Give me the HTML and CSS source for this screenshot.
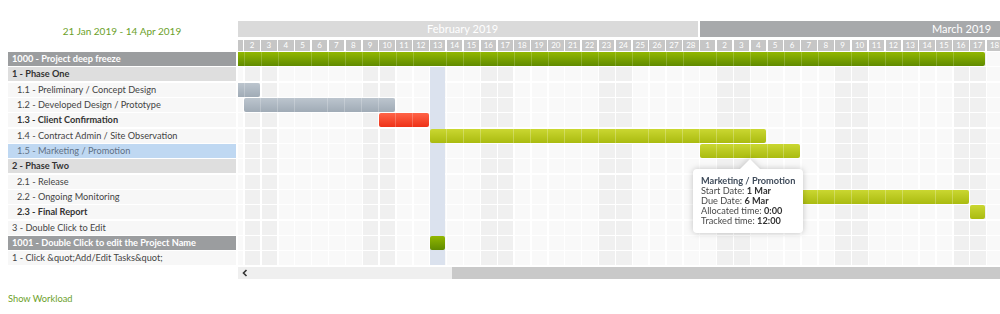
FILE: index.html
```html
<!DOCTYPE html>
<html>
<head>
<meta charset="utf-8">
<link rel="stylesheet" href="styles.css">
</head>
<body>
<div class="page">
  <div class="list">
    <div class="range">21 Jan 2019 - 14 Apr 2019</div>
    <div class="trow project">1000 - Project deep freeze</div>
    <div class="trow phase">1 - Phase One</div>
    <div class="trow task">1.1 - Preliminary / Concept Design</div>
    <div class="trow task">1.2 - Developed Design / Prototype</div>
    <div class="trow task strong">1.3 - Client Confirmation</div>
    <div class="trow task">1.4 - Contract Admin / Site Observation</div>
    <div class="trow task selected">1.5 - Marketing / Promotion</div>
    <div class="trow phase">2 - Phase Two</div>
    <div class="trow task">2.1 - Release</div>
    <div class="trow task">2.2 - Ongoing Monitoring</div>
    <div class="trow task strong">2.3 - Final Report</div>
    <div class="trow plain">3 - Double Click to Edit</div>
    <div class="trow project">1001 - Double Click to edit the Project Name</div>
    <div class="trow plain last">1 - Click &amp;quot;Add/Edit Tasks&amp;quot;</div>
  </div>
  <div class="chart">
    <div class="inner">
      <div class="months">
        <div class="month feb">February 2019</div>
        <div class="month mar">March 2019</div>
      </div>
      <div class="days">
        <span>1</span><span>2</span><span>3</span><span>4</span><span>5</span><span>6</span><span>7</span><span>8</span><span>9</span><span>10</span><span>11</span><span>12</span><span>13</span><span>14</span><span>15</span><span>16</span><span>17</span><span>18</span><span>19</span><span>20</span><span>21</span><span>22</span><span>23</span><span>24</span><span>25</span><span>26</span><span>27</span><span>28</span><span>1</span><span>2</span><span>3</span><span>4</span><span>5</span><span>6</span><span>7</span><span>8</span><span>9</span><span>10</span><span>11</span><span>12</span><span>13</span><span>14</span><span>15</span><span>16</span><span>17</span><span>18</span><span>19</span><span>20</span><span>21</span><span>22</span><span>23</span><span>24</span><span>25</span><span>26</span><span>27</span><span>28</span><span>29</span><span>30</span><span>31</span>
      </div>
      <div class="rows">
        <div class="crow"><div class="bar green" style="grid-column: 1 / 46"></div></div>
        <div class="crow"></div>
        <div class="crow"><div class="bar gray" style="grid-column: 1 / 3"></div></div>
        <div class="crow"><div class="bar gray" style="grid-column: 2 / 11"></div></div>
        <div class="crow"><div class="bar red" style="grid-column: 10 / 13"></div></div>
        <div class="crow"><div class="bar lime" style="grid-column: 13 / 33"></div></div>
        <div class="crow"><div class="bar lime" style="grid-column: 29 / 35"></div></div>
        <div class="crow"></div>
        <div class="crow"></div>
        <div class="crow"><div class="bar lime" style="grid-column: 30 / 45"></div></div>
        <div class="crow"><div class="bar lime" style="grid-column: 45 / 46"></div></div>
        <div class="crow"></div>
        <div class="crow"><div class="bar green" style="grid-column: 13 / 14"></div></div>
        <div class="crow last"></div>
      </div>
    </div>
    <div class="scrollbar">
      <span class="arrow"><svg width="6" height="8" viewBox="0 0 6 8"><polyline points="4.5,1 1.5,4 4.5,7" fill="none" stroke="#333" stroke-width="1.6"/></svg></span>
      <div class="thumb"></div>
    </div>
    <div class="tip">
      <div class="tip-title">Marketing / Promotion</div>
      <div>Start Date: <b>1 Mar</b></div>
      <div>Due Date: <b>6 Mar</b></div>
      <div>Allocated time: <b>0:00</b></div>
      <div>Tracked time: <b>12:00</b></div>
    </div>
  </div>
</div>
<div class="workload">Show Workload</div>
</body>
</html>
```
FILE: styles.css
```css
html, body {
  margin: 0;
  padding: 0;
  background: #fff;
  overflow: hidden;
}
body {
  font-family: Lato, "Open Sans", "Liberation Sans", sans-serif;
  color: #444;
}
.page {
  display: flex;
  padding-top: 21px;
  padding-left: 8px;
}
.list {
  width: 228px;
  flex: none;
  margin-right: 2px;
}
.range {
  height: 31px;
  box-sizing: border-box;
  padding-top: 4px;
  font-size: 10px;
  line-height: 12px;
  text-align: center;
  color: #6c9f2a;
}
.trow {
  height: 14px;
  line-height: 14px;
  margin-bottom: 1.333px;
  font-size: 9.2px;
  padding-left: 4px;
  white-space: nowrap;
  overflow: hidden;
  background: #f7f7f7;
  color: #444;
}
.trow.last { margin-bottom: 0; }
.trow.project {
  background: #9b9d9f;
  color: #fff;
  font-weight: 700;
}
.trow.phase {
  background: #dedede;
  color: #333;
  font-weight: 700;
}
.trow.task { padding-left: 9px; }
.trow.strong { font-weight: 700; color: #333; }
.trow.selected { background: #bfd8f2; color: #5f7185; }

.chart {
  width: 762px;
  flex: none;
  overflow: hidden;
  position: relative;
}
.inner {
  width: 995.625px;
  margin-left: -10.5px;
}
.months {
  display: flex;
  height: 16px;
  margin-bottom: 3px;
}
.month {
  height: 16px;
  line-height: 16px;
  font-size: 11px;
  color: #fff;
  text-align: center;
  flex: none;
}
.month.feb {
  width: 470px;
  margin-right: 2.5px;
  background: #dadada;
}
.month.mar {
  width: 523.125px;
  background: #a7a9ab;
}
.days {
  display: grid;
  grid-template-columns: repeat(59, 16.875px);
  height: 10.5px;
  margin-bottom: 1.5px;
}
.days span {
  margin-right: 1.5px;
  background: #c6c6c6;
  color: #fff;
  font-size: 8px;
  line-height: 10.5px;
  text-align: center;
}
.rows {
  background:
    linear-gradient(#dbe2ee, #dbe2ee) 202.5px 15.333px / 15.375px calc(100% - 15.333px) no-repeat,
    #fff;
}
.crow {
  height: 14px;
  margin-bottom: 1.333px;
  display: grid;
  grid-template-columns: repeat(59, 16.875px);
  grid-template-rows: 14px;
  background:
    repeating-linear-gradient(90deg, transparent 0 15.375px, #fff 15.375px 16.875px),
    linear-gradient(#dbe2ee, #dbe2ee) 202.5px 0 / 15.375px 100% no-repeat,
    repeating-linear-gradient(90deg, #f9f9f9 0 16.875px, #f0f0f0 16.875px 50.625px, #f9f9f9 50.625px 118.125px);
}
.crow.last { margin-bottom: 0; }
.bar {
  grid-row: 1;
  margin-right: 1.5px;
  border-radius: 2px;
  height: 14px;
}
.bar.green {
  background:
    repeating-linear-gradient(90deg, transparent 0 15.9px, rgba(255,255,255,0.18) 15.9px 16.875px),
    linear-gradient(#92b700, #608b00);
}
.bar.lime {
  background:
    repeating-linear-gradient(90deg, transparent 0 15.9px, rgba(255,255,255,0.25) 15.9px 16.875px),
    linear-gradient(#cad731, #aabb10);
}
.bar.gray {
  background:
    repeating-linear-gradient(90deg, transparent 0 15.9px, rgba(255,255,255,0.22) 15.9px 16.875px),
    linear-gradient(#bcc5ce, #a0abb6);
}
.bar.red {
  background:
    repeating-linear-gradient(90deg, transparent 0 15.9px, rgba(255,255,255,0.22) 15.9px 16.875px),
    linear-gradient(#ff6448, #ee3218);
}
.scrollbar {
  margin-top: 1.4px;
  height: 12px;
  background: #efefef;
  display: flex;
  align-items: center;
}
.arrow {
  width: 214px;
  height: 12px;
  flex: none;
  box-sizing: border-box;
  padding-left: 4px;
  display: flex;
  align-items: center;
}
.arrow svg { display: block; }
.thumb {
  flex: 1;
  height: 12px;
  background: #c9c9c9;
}
.tip {
  position: absolute;
  left: 455px;
  top: 148px;
  width: 110px;
  height: 64px;
  box-sizing: border-box;
  padding: 7px 8px;
  background: #fff;
  border-radius: 4px;
  font-size: 9.2px;
  line-height: 10px;
  color: #4a4a4a;
  white-space: nowrap;
  filter: drop-shadow(0 0 3px rgba(0,0,0,0.22));
}
.tip::before {
  content: "";
  position: absolute;
  left: 47px;
  top: -10px;
  border-left: 10px solid transparent;
  border-right: 10px solid transparent;
  border-bottom: 10px solid #fff;
}
.tip b { color: #333; }
.tip-title {
  font-weight: 700;
  color: #3f4b5a;
}
.workload {
  margin-left: 8px;
  margin-top: 14px;
  font-size: 9.3px;
  line-height: 12px;
  color: #6c9f2a;
}
```
